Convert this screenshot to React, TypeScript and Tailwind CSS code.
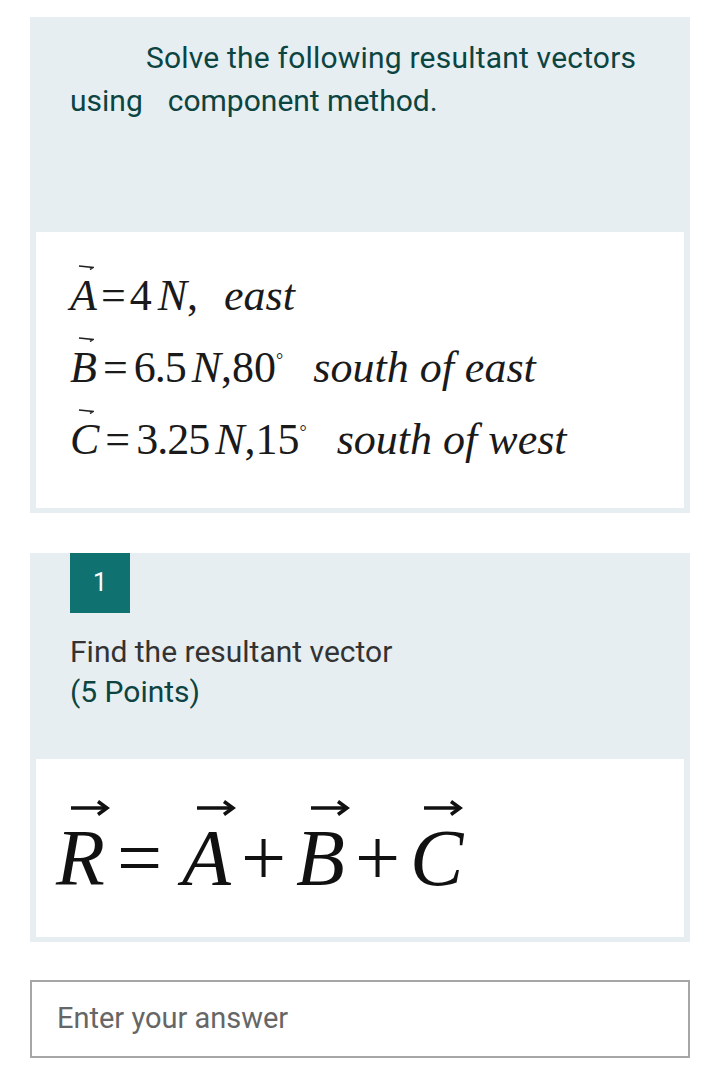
import React from 'react';

const serif = "font-['Liberation_Serif','Times_New_Roman',serif]";

const Bar = () => (
  <svg
    className="absolute left-[8px] top-[4px]"
    width="16"
    height="6"
    viewBox="0 0 16 6"
  >
    <path d="M1 2 L15 3.5 L12 5.5" fill="none" stroke="#222" strokeWidth="1.6" />
  </svg>
);

const Arrow = ({ shift }: { shift: string }) => (
  <svg className={shift} width="42" height="18" viewBox="0 0 42 18">
    <path d="M2 9 H36" stroke="#111" strokeWidth="3.5" />
    <path d="M29 2.5 L38 9 L29 15.5" fill="none" stroke="#111" strokeWidth="3.5" />
  </svg>
);

const Vec = ({ letter, shift }: { letter: string; shift: string }) => (
  <span className="flex flex-col items-center">
    <Arrow shift={shift} />
    <span className="italic leading-[70px] mt-[6px]">{letter}</span>
  </span>
);

const VectorLine = ({ letter, rest }: { letter: string; rest: React.ReactNode }) => (
  <div className="flex items-baseline h-[72px] leading-[72px]">
    <span className="relative italic">
      <Bar />
      {letter}
    </span>
    {rest}
  </div>
);

const App: React.FC = () => {
  return (
    <div className="bg-white w-[720px] min-h-[1081px] pt-[17px] px-[30px] font-['Roboto',sans-serif]">
      <div className="bg-[#e6eef2] px-[6px] pb-[5px]">
        <div className="h-[215px] pt-[19px] px-[34px] text-[30px] leading-[43px] text-[#0c4441]">
          <div className="pl-[76px] tracking-[0.2px]">Solve the following resultant vectors</div>
          <div>
            <span>using</span>
            <span className="ml-[25px]">component method.</span>
          </div>
        </div>
        <div className={`bg-white h-[276px] pt-[28px] pl-[34px] text-[44px] text-[#1a1a1a] ${serif}`}>
          <VectorLine
            letter="A"
            rest={
              <>
                <span className="mx-[4px]">=</span>
                <span>4</span>
                <span className="italic ml-[6px]">N</span>
                <span>,</span>
                <span className="italic ml-[26px]">east</span>
              </>
            }
          />
          <VectorLine
            letter="B"
            rest={
              <>
                <span className="mx-[6px]">=</span>
                <span className="tracking-[-1px]">6.5</span>
                <span className="italic ml-[6px]">N</span>
                <span>,</span>
                <span>80</span>
                <span className="text-[18px] self-start leading-[40px] mt-[8px]">°</span>
                <span className="italic ml-[30px]">south of east</span>
              </>
            }
          />
          <VectorLine
            letter="C"
            rest={
              <>
                <span className="mx-[6px]">=</span>
                <span className="tracking-[-1px]">3.25</span>
                <span className="italic ml-[6px]">N</span>
                <span>,</span>
                <span>15</span>
                <span className="text-[18px] self-start leading-[40px] mt-[8px]">°</span>
                <span className="italic ml-[30px]">south of west</span>
              </>
            }
          />
        </div>
      </div>

      <div className="mt-[40px] bg-[#e6eef2] px-[6px] pb-[5px]">
        <div className="h-[206px] px-[34px]">
          <div className="w-[60px] h-[60px] bg-[#0f7270] text-white text-[25px] flex items-center justify-center">
            1
          </div>
          <div className="mt-[19px] text-[30px] leading-[40px] text-[#333333]">
            Find the resultant vector
          </div>
          <div className="text-[30px] leading-[40px] text-[#0c4441]">(5 Points)</div>
        </div>
        <div className={`bg-white h-[178px] pl-[20px] pt-[40px] text-[80px] text-[#111] ${serif}`}>
          <div className="flex items-end">
            <Vec letter="R" shift="translate-x-[10px]" />
            <span className="leading-[70px] ml-[12px] mr-[20px]">=</span>
            <Vec letter="A" shift="translate-x-[10px]" />
            <span className="leading-[70px] mx-[10px]">+</span>
            <Vec letter="B" shift="translate-x-[10px]" />
            <span className="leading-[70px] mx-[10px]">+</span>
            <Vec letter="C" shift="translate-x-[6px]" />
          </div>
        </div>
      </div>

      <div className="mt-[38px] h-[78px] border-2 border-[#a6a6a6] flex items-center px-[25px] text-[29px] text-[#666666]">
        Enter your answer
      </div>
    </div>
  );
};

export default App;
